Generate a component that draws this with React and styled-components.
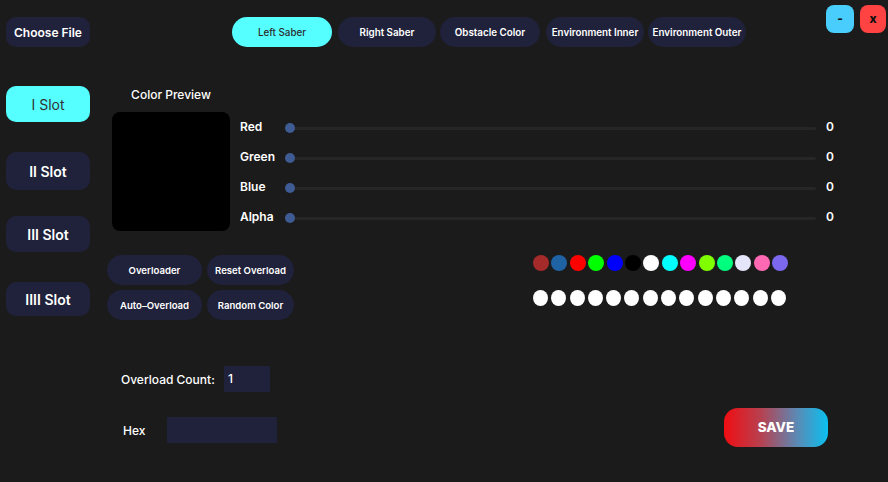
import React from 'react';
import styled, { createGlobalStyle } from 'styled-components';

const GlobalStyle = createGlobalStyle`
  html, body {
    margin: 0;
    padding: 0;
    background: #1b1b1b;
  }
  body {
    font-family: Inter, "Noto Sans", sans-serif;
    color: #ffffff;
  }
`;

const NAVY = '#20213a';
const CYAN = '#55ffff';

const Page = styled.div`
  width: 888px;
  height: 482px;
  overflow: hidden;
  display: flex;
  flex-direction: column;
`;

const Header = styled.div`
  display: flex;
  align-items: flex-start;
  padding: 5px 2px 0 6px;
`;

const FileButton = styled.button`
  margin-top: 12px;
  width: 84px;
  height: 30px;
  border: none;
  border-radius: 10px;
  background: ${NAVY};
  color: #fff;
  font-family: inherit;
  font-weight: 600;
  font-size: 12px;
  padding: 0;
`;

const Tabs = styled.div`
  display: flex;
  margin-top: 12px;
  margin-left: 142px;
`;

const Tab = styled.button`
  width: ${p => p.w}px;
  height: 30px;
  margin-right: ${p => p.gap}px;
  border: none;
  border-radius: 15px;
  background: ${p => (p.active ? CYAN : NAVY)};
  color: ${p => (p.active ? '#2b2b2b' : '#fff')};
  font-family: inherit;
  font-weight: ${p => (p.active ? 500 : 600)};
  font-size: 9.8px;
  padding: 0;
  white-space: nowrap;
`;

const WindowControls = styled.div`
  display: flex;
  gap: 6px;
  margin-left: auto;
`;

const WinButton = styled.button`
  width: ${p => p.w}px;
  height: 28px;
  border: none;
  border-radius: 8px;
  background: ${p => p.color};
  color: #111;
  font-family: inherit;
  font-weight: 800;
  font-size: 12px;
  padding: 0 0 2px;
`;

const Body = styled.div`
  display: flex;
`;

const Sidebar = styled.div`
  display: flex;
  flex-direction: column;
  padding-left: 6px;
  margin-top: 39px;
`;

const SlotButton = styled.button`
  width: 84px;
  height: ${p => p.h}px;
  margin-bottom: ${p => p.mb}px;
  border: none;
  border-radius: 10px;
  background: ${p => (p.active ? CYAN : NAVY)};
  color: ${p => (p.active ? '#333' : '#fff')};
  font-family: inherit;
  font-weight: ${p => (p.active ? 400 : 600)};
  font-size: 14px;
  padding: 0;
`;

const Main = styled.div`
  display: flex;
  flex-direction: column;
  margin-left: 17px;
  flex: 1;
`;

const TopSection = styled.div`
  display: flex;
  margin-top: 40px;
`;

const PreviewColumn = styled.div`
  display: flex;
  flex-direction: column;
  margin-left: 5px;
  width: 118px;
`;

const PreviewTitle = styled.div`
  text-align: center;
  font-size: 12px;
  font-weight: 500;
  height: 16px;
  line-height: 16px;
  margin-bottom: 9px;
`;

const PreviewBox = styled.div`
  width: 118px;
  height: 119px;
  border-radius: 8px;
  background: ${p => p.color};
`;

const Sliders = styled.div`
  display: flex;
  flex-direction: column;
  margin-left: 10px;
  margin-top: 25px;
`;

const SliderRow = styled.div`
  display: flex;
  align-items: center;
  height: 30px;
`;

const SliderLabel = styled.div`
  width: 45px;
  font-size: 12px;
  font-weight: 600;
  margin-top: -2px;
`;

const Track = styled.div`
  position: relative;
  width: 531px;
  height: 3px;
  background: #262626;
  border-radius: 2px;
  margin-top: 2px;
`;

const Thumb = styled.div`
  position: absolute;
  left: 0;
  top: 50%;
  width: 10px;
  height: 10px;
  margin-top: -5px;
  border-radius: 50%;
  background: #3f5b94;
`;

const SliderValue = styled.div`
  margin-left: 10px;
  font-size: 12px;
  font-weight: 600;
  margin-top: -2px;
`;

const ActionsRow = styled.div`
  display: flex;
  margin-top: 23px;
`;

const ActionGrid = styled.div`
  display: grid;
  grid-template-columns: 95px 87px;
  grid-auto-rows: 30px;
  column-gap: 5px;
  row-gap: 5px;
`;

const ActionButton = styled.button`
  border: none;
  border-radius: 15px;
  background: ${NAVY};
  color: #fff;
  font-family: inherit;
  font-weight: 600;
  font-size: 9.6px;
  padding: 0;
  white-space: nowrap;
`;

const Swatches = styled.div`
  display: flex;
  flex-direction: column;
  gap: 19px;
  margin-left: 239px;
`;

const SwatchRow = styled.div`
  display: flex;
  gap: ${p => (p.empty ? 3.3 : 2.4)}px;
`;

const Swatch = styled.div`
  width: ${p => (p.empty ? 15 : 16)}px;
  height: 16px;
  border-radius: 50%;
  background: ${p => p.color};
`;

const FieldRow = styled.div`
  display: flex;
  align-items: center;
  margin-top: ${p => p.mt}px;
`;

const FieldLabel = styled.div`
  margin-left: ${p => p.ml}px;
  width: ${p => p.w}px;
  font-size: 12px;
  font-weight: 500;
`;

const FieldInput = styled.div`
  width: ${p => p.w}px;
  height: 26px;
  background: ${NAVY};
  box-sizing: border-box;
  padding-left: 4px;
  font-size: 12px;
  line-height: 26px;
  font-weight: 500;
`;

const SaveButton = styled.button`
  margin-left: auto;
  margin-right: 60px;
  margin-top: -5px;
  width: 104px;
  height: 39px;
  border: none;
  border-radius: 14px;
  background: linear-gradient(90deg, #f00d12 0%, #b8404f 35%, #5b89b4 70%, #0bc0f0 100%);
  color: #fff;
  font-family: inherit;
  font-weight: 800;
  font-size: 13.5px;
  padding: 0 0 2px;
`;

const tabs = [
  { label: 'Left Saber', w: 100, gap: 6, active: true },
  { label: 'Right Saber', w: 98, gap: 4 },
  { label: 'Obstacle Color', w: 100, gap: 6 },
  { label: 'Environment Inner', w: 98, gap: 4 },
  { label: 'Environment Outer', w: 98, gap: 0 },
];

const slots = [
  { label: 'I Slot', h: 36, mb: 30, active: true },
  { label: 'II Slot', h: 38, mb: 26 },
  { label: 'III Slot', h: 36, mb: 30 },
  { label: 'IIII Slot', h: 34, mb: 0 },
];

const channels = ['Red', 'Green', 'Blue', 'Alpha'];

const presets = [
  '#a52a2a', '#1f63a5', '#ff0000', '#00ff00', '#0000ff', '#000000', '#ffffff',
  '#00ffff', '#ff00ff', '#7fff00', '#00ff7f', '#e6e6fa', '#ff69b4', '#7b68ee',
];

const saved = Array.from({ length: 14 }, () => '#ffffff');

export default function App() {
  return (
    <Page>
      <GlobalStyle />
      <Header>
        <FileButton>Choose File</FileButton>
        <Tabs>
          {tabs.map(t => (
            <Tab key={t.label} w={t.w} gap={t.gap} active={t.active}>
              {t.label}
            </Tab>
          ))}
        </Tabs>
        <WindowControls>
          <WinButton w={28} color="#48cdfc">-</WinButton>
          <WinButton w={26} color="#ff4343">x</WinButton>
        </WindowControls>
      </Header>
      <Body>
        <Sidebar>
          {slots.map(s => (
            <SlotButton key={s.label} h={s.h} mb={s.mb} active={s.active}>
              {s.label}
            </SlotButton>
          ))}
        </Sidebar>
        <Main>
          <TopSection>
            <PreviewColumn>
              <PreviewTitle>Color Preview</PreviewTitle>
              <PreviewBox color="#000" />
            </PreviewColumn>
            <Sliders>
              {channels.map(c => (
                <SliderRow key={c}>
                  <SliderLabel>{c}</SliderLabel>
                  <Track>
                    <Thumb />
                  </Track>
                  <SliderValue>0</SliderValue>
                </SliderRow>
              ))}
            </Sliders>
          </TopSection>
          <ActionsRow>
            <ActionGrid>
              <ActionButton>Overloader</ActionButton>
              <ActionButton>Reset Overload</ActionButton>
              <ActionButton>Auto–Overload</ActionButton>
              <ActionButton>Random Color</ActionButton>
            </ActionGrid>
            <Swatches>
              <SwatchRow>
                {presets.map((c, i) => (
                  <Swatch key={i} color={c} />
                ))}
              </SwatchRow>
              <SwatchRow empty>
                {saved.map((c, i) => (
                  <Swatch key={i} color={c} empty />
                ))}
              </SwatchRow>
            </Swatches>
          </ActionsRow>
          <FieldRow mt={46}>
            <FieldLabel ml={14} w={103}>Overload Count:</FieldLabel>
            <FieldInput w={46}>1</FieldInput>
          </FieldRow>
          <FieldRow mt={21}>
            <FieldLabel ml={16} w={44}>Hex</FieldLabel>
            <FieldInput w={110} />
            <SaveButton>SAVE</SaveButton>
          </FieldRow>
        </Main>
      </Body>
    </Page>
  );
}
